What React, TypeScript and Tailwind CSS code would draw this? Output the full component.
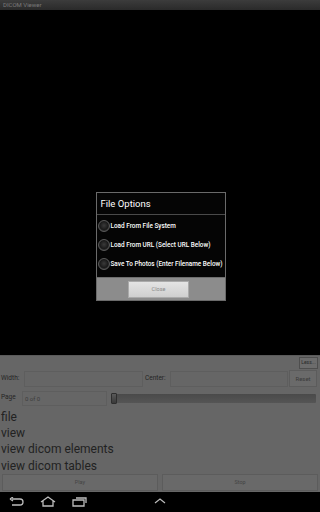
import React from "react";

const font = { fontFamily: '"Roboto","Liberation Sans",sans-serif' };

function Radio() {
  return (
    <div className="w-[12px] h-[12px] rounded-full bg-[radial-gradient(circle_at_50%_45%,#3a3a3a_0%,#1a1a1a_55%,#555_100%)] border border-[#5a5a5a] shrink-0" />
  );
}

export default function App() {
  return (
    <div className="w-[320px] h-[512px] flex flex-col bg-black overflow-hidden" style={font}>
      {/* title bar */}
      <div className="h-[10px] bg-gradient-to-b from-[#3c3c3c] to-[#2a2a2a] flex items-center pl-[3px]">
        <span className="text-[6px] leading-none text-[#7a7a7a]">DICOM Viewer</span>
      </div>
      {/* black canvas with dialog */}
      <div className="h-[345px] bg-black flex flex-col items-center pt-[182px]">
        <div className="w-[130px] h-[109px] border border-[#6a6a6a] bg-[#050505] flex flex-col ml-[1px]">
          <div className="h-[22px] flex items-center pl-[4px] border-b border-[#4a4a4a]">
            <span className="text-[9.5px] text-white leading-none">File Options</span>
          </div>
          <div className="flex flex-col pt-[5px] gap-[7px] pl-[1px]">
            {[
              "Load From File System",
              "Load From URL (Select URL Below)",
              "Save To Photos (Enter Filename Below)",
            ].map((t) => (
              <div key={t} className="flex items-center h-[12px] gap-[1px]">
                <Radio />
                <span className="text-[6.4px] font-medium text-white leading-none whitespace-nowrap">{t}</span>
              </div>
            ))}
          </div>
          <div className="mt-auto h-[23px] bg-[#8c8c8c] border-t border-[#6e6e6e] flex justify-center items-center">
            <div className="w-[61px] h-[17px] bg-gradient-to-b from-[#e4e4e4] to-[#cfcfcf] border border-[#aaa] flex items-center justify-center ml-[-4px]">
              <span className="text-[5.5px] text-[#8a8a8a]">Close</span>
            </div>
          </div>
        </div>
      </div>
      {/* dimmed control panel */}
      <div className="h-[137px] bg-[#666666] flex flex-col relative border-t border-[#5a5a5a]">
        <div className="flex justify-end pr-[2px] pt-[1px] h-[13px]">
          <div className="w-[19px] h-[12px] border border-[#4e4e4e] bg-[#6c6c6c] flex items-center justify-center">
            <span className="text-[5px] text-[#2a2a2a]">Less...</span>
          </div>
        </div>
        <div className="flex items-center h-[18px] mt-[1px]">
          <span className="text-[6.5px] text-[#252525] w-[24px] pl-[1px]">Width:</span>
          <div className="w-[119px] h-[16px] border border-[#5e5e5e]" />
          <span className="text-[6.5px] text-[#252525] w-[27px] pl-[2px]">Center:</span>
          <div className="w-[118px] h-[16px] border border-[#5e5e5e]" />
          <div className="w-[28px] h-[17px] ml-[1px] border border-[#5c5c5c] bg-[#6a6a6a] flex items-center justify-center">
            <span className="text-[6px] text-[#3a3a3a]">Reset</span>
          </div>
        </div>
        <div className="flex items-center h-[17px] mt-[2px]">
          <span className="text-[6.5px] text-[#252525] w-[22px] pl-[1px]">Page</span>
          <div className="w-[85px] h-[15px] border border-[#5e5e5e] flex items-center pl-[2px]">
            <span className="text-[6px] text-[#3c3c3c]">0 of 0</span>
          </div>
          <div className="relative ml-[4px] w-[205px] h-[9px] bg-gradient-to-b from-[#4a4a4a] to-[#555] rounded-[1px]">
            <div className="absolute left-[0px] top-[-1px] w-[6px] h-[11px] rounded-[1px] bg-gradient-to-b from-[#5a5a5a] to-[#3a3a3a] border border-[#2e2e2e]" />
          </div>
        </div>
        <div className="flex flex-col text-[12px] leading-[16.3px] text-[#222] pl-[1px] mt-[2px]">
          <span>file</span>
          <span>view</span>
          <span>view dicom elements</span>
          <span>view dicom tables</span>
        </div>
        <div className="mt-auto flex gap-[4px] px-[2px] pb-[1px]">
          <div className="flex-1 h-[17px] border border-[#5c5c5c] bg-[#696969] flex items-center justify-center">
            <span className="text-[5.5px] text-[#444]">Play</span>
          </div>
          <div className="flex-1 h-[17px] border border-[#5c5c5c] bg-[#696969] flex items-center justify-center">
            <span className="text-[5.5px] text-[#444]">Stop</span>
          </div>
        </div>
      </div>
      {/* nav bar */}
      <div className="flex-1 bg-black flex items-center relative">
        <svg className="absolute left-[9px] top-[5px]" width="16" height="10" viewBox="0 0 16 10" fill="none" stroke="#bdbdbd" strokeWidth="1.3">
          <path d="M3 2h8a3 3 0 0 1 0 6H3" />
          <path d="M1 2l3-2M1 2l3 2" />
        </svg>
        <svg className="absolute left-[40px] top-[4px]" width="16" height="11" viewBox="0 0 16 11" fill="none" stroke="#bdbdbd" strokeWidth="1.3">
          <path d="M1 6L8 1l7 5M3 5v5h10V5" />
        </svg>
        <svg className="absolute left-[72px] top-[4px]" width="16" height="11" viewBox="0 0 16 11" fill="none" stroke="#bdbdbd" strokeWidth="1.3">
          <path d="M1 4h11v6H1z" />
          <path d="M4 2h10v5" />
        </svg>
        <svg className="absolute left-[154px] top-[6px]" width="12" height="6" viewBox="0 0 12 6" fill="none" stroke="#bdbdbd" strokeWidth="1.2">
          <path d="M1 5l5-4 5 4" />
        </svg>
      </div>
    </div>
  );
}
